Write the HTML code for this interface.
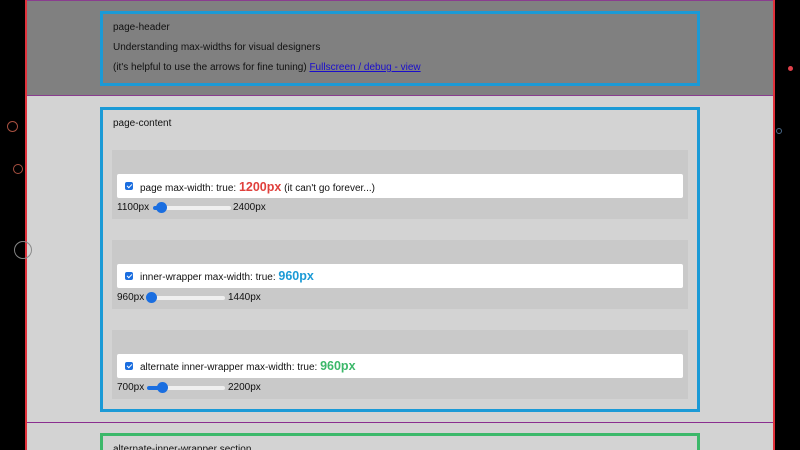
<!DOCTYPE html>
<html style="overflow:hidden"><head><style>
*{margin:0;padding:0;box-sizing:border-box}
html,body{width:800px;height:450px;overflow:hidden}
body{background:#000;position:relative;font-family:"Liberation Sans",sans-serif;font-size:10px;color:#111}
.abs{position:absolute}
.page{left:25px;top:0;width:750px;height:450px;border-left:2px solid #e0323c;border-right:2px solid #e0323c}
.hdr{left:27px;top:0;width:746px;height:96px;background:#808080;border-top:1px solid #8a3d8f;border-bottom:1px solid #8a3d8f}
.cnt{left:27px;top:96px;width:746px;height:327px;background:#d3d3d3;border-bottom:1px solid #8a2e8f}
.low{left:27px;top:423px;width:746px;height:27px;background:#d3d3d3}
.box{left:100px;width:600px;border:3px solid #1b9ad6}
.panel{left:112px;width:576px;height:69px;background:#c9c9c9}
.row{left:117px;width:566px;height:24px;background:#fff;border-radius:2px}
.cb{position:absolute;left:8px;top:8px;width:8px;height:8px;background:#1a6ee0;border-radius:2px}
.cb:after{content:"";position:absolute;left:2.5px;top:1px;width:2px;height:4px;border:solid #fff;border-width:0 1.5px 1.5px 0;transform:rotate(45deg)}
.rt{position:absolute;left:23px;top:6px;white-space:nowrap}
.track{height:4px;background:#efefef;border-radius:2px}
.thumb{width:11px;height:11px;border-radius:50%;background:#1a6ee0}
a{color:#1a0dcc}
</style></head><body>
<div class="abs page"></div>
<div class="abs hdr"></div>
<div class="abs cnt"></div>
<div class="abs low"></div>
<div class="abs box" style="top:11px;height:75px"></div>
<div class="abs" style="left:113px;top:22px">page-header</div>
<div class="abs" style="left:113px;top:42px">Understanding max-widths for visual designers</div>
<div class="abs" style="left:113px;top:62px">(it's helpful to use the arrows for fine tuning) <a href="#">Fullscreen / debug - view</a></div>
<div class="abs box" style="top:107px;height:305px"></div>
<div class="abs" style="left:113px;top:118px">page-content</div>

<div class="abs panel" style="top:150px"></div>
<div class="abs row" style="top:174px"><div class="cb"></div><div class="rt" style="top:6px">page max-width: true: <b style="color:#e0403c;font-size:12.5px">1200px</b> (it can't go forever...)</div></div>
<div class="abs" style="left:117px;top:202px">1100px</div>
<div class="abs track" style="left:153px;top:206px;width:78px"></div>
<div class="abs track" style="left:153px;top:206px;width:8px;background:#1a6ee0"></div>
<div class="abs thumb" style="left:156px;top:202px"></div>
<div class="abs" style="left:233px;top:202px">2400px</div>

<div class="abs panel" style="top:240px"></div>
<div class="abs row" style="top:264px"><div class="cb"></div><div class="rt" style="top:5px">inner-wrapper max-width: true: <b style="color:#1b9ad6;font-size:12.5px">960px</b></div></div>
<div class="abs" style="left:117px;top:292px">960px</div>
<div class="abs track" style="left:147px;top:296px;width:78px"></div>
<div class="abs thumb" style="left:146px;top:292px"></div>
<div class="abs" style="left:228px;top:292px">1440px</div>

<div class="abs panel" style="top:330px"></div>
<div class="abs row" style="top:354px"><div class="cb"></div><div class="rt" style="top:5px">alternate inner-wrapper max-width: true: <b style="color:#3cb86a;font-size:12.5px">960px</b></div></div>
<div class="abs" style="left:117px;top:382px">700px</div>
<div class="abs track" style="left:147px;top:386px;width:78px"></div>
<div class="abs track" style="left:147px;top:386px;width:15px;background:#1a6ee0"></div>
<div class="abs thumb" style="left:157px;top:382px"></div>
<div class="abs" style="left:228px;top:382px">2200px</div>

<div class="abs" style="left:100px;top:433px;width:600px;height:17px;border:3px solid #3cb86a;border-bottom:none"></div>
<div class="abs" style="left:113px;top:444px">alternate-inner-wrapper section</div>

<div class="abs" style="left:7px;top:121px;width:11px;height:11px;border:1px solid #a85040;border-radius:50%"></div>
<div class="abs" style="left:13px;top:164px;width:10px;height:10px;border:1px solid #a85040;border-radius:50%"></div>
<div class="abs" style="left:14px;top:241px;width:18px;height:18px;border:1px solid #888;border-radius:50%"></div>
<div class="abs" style="left:788px;top:66px;width:5px;height:5px;background:#e0404a;border-radius:50%"></div>
<div class="abs" style="left:776px;top:128px;width:6px;height:6px;border:1px solid #4a6a8a;border-radius:50%"></div>
</body></html>
